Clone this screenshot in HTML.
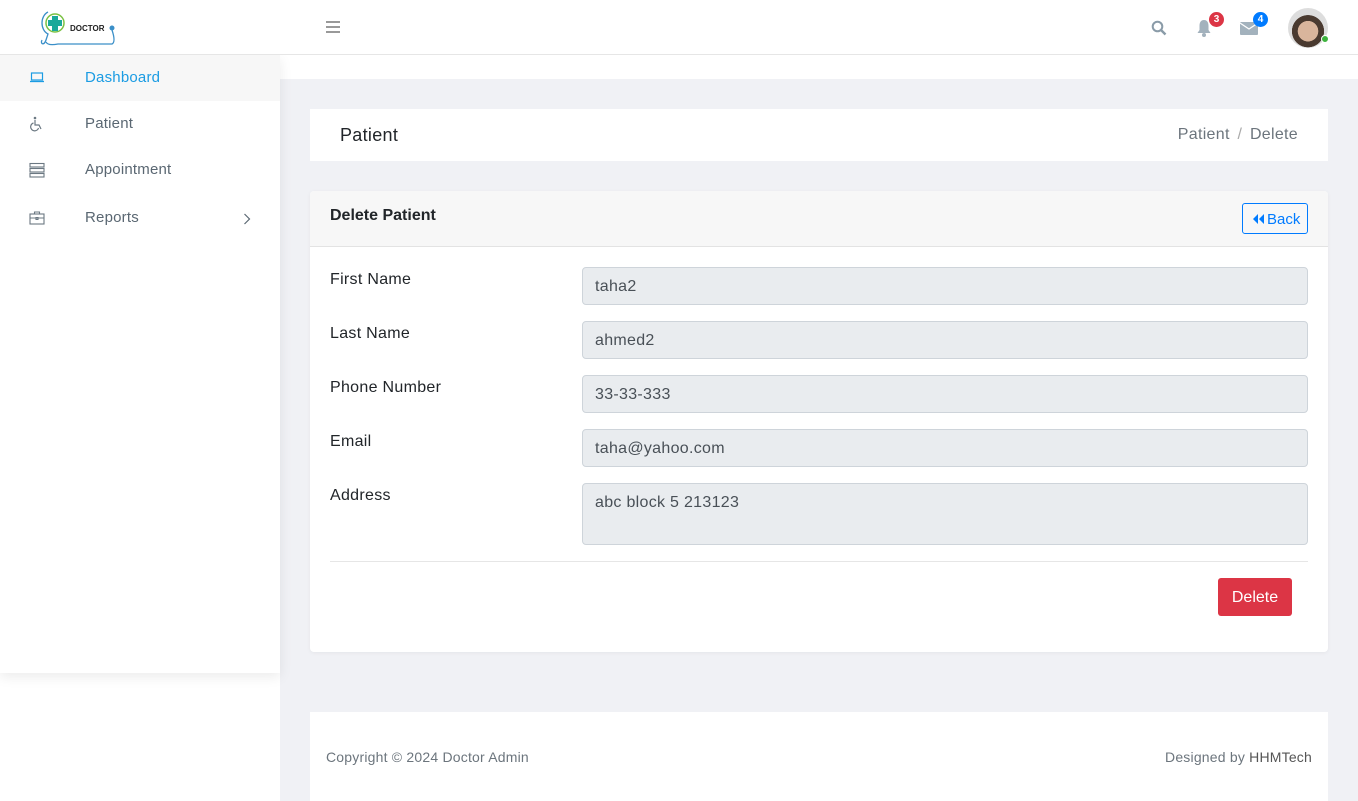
<!DOCTYPE html>
<html><head><meta charset="utf-8"><style>
*{box-sizing:border-box;margin:0;padding:0}
body{width:1358px;height:801px;overflow:hidden;font-family:"Liberation Sans",sans-serif;background:#fff;position:relative;color:#212529}
.hdr{position:absolute;left:0;top:0;width:1358px;height:55px;background:#fff;border-bottom:1px solid #e6e6e6;z-index:3}
.main{position:absolute;left:280px;top:79px;width:1078px;height:722px;background:#f0f1f5}
.side{position:absolute;left:0;top:55px;width:280px;height:618px;background:#fff;box-shadow:0 4px 12px rgba(0,0,0,.08);z-index:2}
.mi{position:absolute;left:0;width:280px;height:46px;font-size:15px;color:#5a6772;letter-spacing:.2px}
.mi span{position:absolute;left:85px;top:14px}
.mi svg{position:absolute;left:29px;top:15px}
.card{position:absolute;background:#fff;border-radius:4px}
.lbl{position:absolute;left:20px;font-size:16px;color:#212529;letter-spacing:.3px}
.inp{position:absolute;left:272px;width:726px;height:38px;background:#e9ecef;border:1px solid #ced4da;border-radius:4px;font-size:16px;color:#495057;padding:10px 12px;letter-spacing:.3px}
.badge{position:absolute;width:15px;height:15px;border-radius:50%;color:#fff;font-size:10px;font-weight:bold;text-align:center;line-height:15px}
</style></head><body>
<div class="hdr">
<svg style="position:absolute;left:38px;top:8px" width="80" height="40" viewBox="0 0 80 40">
<path d="M10 4 C2 8 2 22 10 26 L8 32 C6 38 2 36 4 32" fill="none" stroke="#3a8fc8" stroke-width="1.3"/>
<path d="M8 34 Q10 38 20 36 L74 36 Q78 34 74 22" fill="none" stroke="#3a8fc8" stroke-width="1.3"/>
<circle cx="17" cy="15" r="9" fill="none" stroke="#7ac143" stroke-width="1.5"/>
<rect x="14" y="8" width="6" height="15" fill="#1aa99a"/><rect x="10" y="12" width="14" height="6" fill="#1aa99a"/>
<text x="32" y="23" font-size="8" font-weight="bold" font-family="Liberation Sans" fill="#222">DOCTOR</text>
<circle cx="74" cy="20" r="2.5" fill="#3a8fc8"/>
</svg>
<div style="position:absolute;left:326px;top:21px;width:14px">
<div style="height:2px;background:#999;margin-bottom:3px"></div><div style="height:2px;background:#999;margin-bottom:3px"></div><div style="height:2px;background:#999"></div></div>
<svg style="position:absolute;left:1151px;top:20px" width="16" height="16" viewBox="0 0 16 16"><circle cx="6.5" cy="6.5" r="4.8" fill="none" stroke="#8a9ba8" stroke-width="2"/><path d="M10 10l4.5 4.5" stroke="#8a9ba8" stroke-width="2.4"/></svg>
<svg style="position:absolute;left:1196px;top:19px" width="16" height="18" viewBox="0 0 16 18"><path d="M8 1C4.5 1 3.5 4 3.5 7v4L1.5 14h13L12.5 11V7C12.5 4 11.5 1 8 1z" fill="#a3b2bd"/><circle cx="8" cy="16" r="2" fill="#a3b2bd"/></svg>
<div class="badge" style="left:1209px;top:12px;background:#dc3545">3</div>
<svg style="position:absolute;left:1240px;top:22px" width="18" height="13" viewBox="0 0 18 13"><rect width="18" height="13" rx="1" fill="#a3b2bd"/><path d="M0 1l9 6 9-6" fill="none" stroke="#fff" stroke-width="1.3"/></svg>
<div class="badge" style="left:1253px;top:12px;background:#007bff">4</div>
<div style="position:absolute;left:1288px;top:8px;width:40px;height:40px;border-radius:50%;background:radial-gradient(circle at 50% 58%,#d9b59c 0 33%,#4a3a30 34% 52%,#ddd 53%)"></div>
<div style="position:absolute;left:1321px;top:35px;width:8px;height:8px;border-radius:50%;background:#3eb33e;border:1px solid #fff"></div>
</div>
<div class="side">
<div class="mi" style="top:0;background:#f7f7f7;color:#1b9ce3"><svg width="16" height="14" viewBox="0 0 16 14"><rect x="2.5" y="3" width="11" height="7" fill="none" stroke="#1b9ce3" stroke-width="1.2"/><path d="M1 11.5h14" stroke="#1b9ce3" stroke-width="1.3"/></svg><span style="top:14px">Dashboard</span></div>
<div class="mi" style="top:46px"><svg width="16" height="16" viewBox="0 0 16 16"><circle cx="6" cy="2" r="1.3" fill="#6b7882"/><path d="M6 4v5h4l2 4M4.5 7a4 4 0 1 0 5 5" fill="none" stroke="#6b7882" stroke-width="1.2"/></svg><span>Patient</span></div>
<div class="mi" style="top:92px"><svg width="16" height="16" viewBox="0 0 16 16" fill="none" stroke="#6b7882" stroke-width="1.1"><rect x="1" y="1.5" width="14" height="3.5"/><rect x="1" y="6.5" width="14" height="3.5"/><rect x="1" y="11.5" width="14" height="3.5"/></svg><span>Appointment</span></div>
<div class="mi" style="top:140px"><svg width="16" height="16" viewBox="0 0 16 16" fill="none" stroke="#6b7882" stroke-width="1.1"><rect x="1" y="4" width="14" height="10"/><path d="M5.5 4V2h5v2M1 8h14M7 7.5h2v2H7z"/></svg><span>Reports</span>
<svg style="left:243px;top:18px" width="8" height="12" viewBox="0 0 8 12"><path d="M1.5 1l5 5-5 5" fill="none" stroke="#5a6772" stroke-width="1.2"/></svg></div>
</div>
<div class="main"></div>
<div class="card" style="left:310px;top:109px;width:1018px;height:52px;border-radius:0">
<div style="position:absolute;left:30px;top:16px;font-size:18px;letter-spacing:.3px">Patient</div>
<div style="position:absolute;right:30px;top:17px;font-size:16px;color:#6c757d;letter-spacing:.3px">Patient <span style="margin:0 3px;color:#aaa">/</span> Delete</div>
</div>
<div class="card" style="left:310px;top:191px;width:1018px;height:461px;box-shadow:0 1px 4px rgba(0,0,0,.05)">
<div style="height:56px;background:#f7f7f7;border-bottom:1px solid #e3e3e3;border-radius:4px 4px 0 0;position:relative">
<div style="position:absolute;left:20px;top:16px;font-size:16px;font-weight:bold">Delete Patient</div>
<div style="position:absolute;left:932px;top:12px;width:66px;height:31px;border:1px solid #007bff;border-radius:3px;color:#007bff;font-size:15px;padding:7px 0 0 9px"><svg width="13" height="12" viewBox="0 0 13 12" style="vertical-align:-1px;margin-right:2px"><path d="M6 1L1 6l5 5zM12 1L7 6l5 5z" fill="#007bff"/></svg>Back</div>
</div>
<div class="lbl" style="top:80px">First Name</div><div class="inp" style="top:76px">taha2</div>
<div class="lbl" style="top:134px">Last Name</div><div class="inp" style="top:130px">ahmed2</div>
<div class="lbl" style="top:188px">Phone Number</div><div class="inp" style="top:184px">33-33-333</div>
<div class="lbl" style="top:242px">Email</div><div class="inp" style="top:238px">taha@yahoo.com</div>
<div class="lbl" style="top:296px">Address</div><div class="inp" style="top:292px;height:62px">abc block 5 213123</div>
<div style="position:absolute;left:20px;top:370px;width:978px;height:1px;background:#e6e6e6"></div>
<div style="position:absolute;left:908px;top:387px;width:74px;height:38px;background:#dc3545;border-radius:3px;color:#fff;font-size:16px;text-align:center;line-height:40px">Delete</div>
</div>
<div class="card" style="left:310px;top:712px;width:1018px;height:89px;border-radius:0">
<div style="position:absolute;left:16px;top:37px;font-size:14px;color:#6c757d;letter-spacing:.2px">Copyright © 2024 Doctor Admin</div>
<div style="position:absolute;right:16px;top:37px;font-size:14px;color:#6c757d;letter-spacing:.2px">Designed by <span style="color:#555">HHMTech</span></div>
</div>
</body></html>
